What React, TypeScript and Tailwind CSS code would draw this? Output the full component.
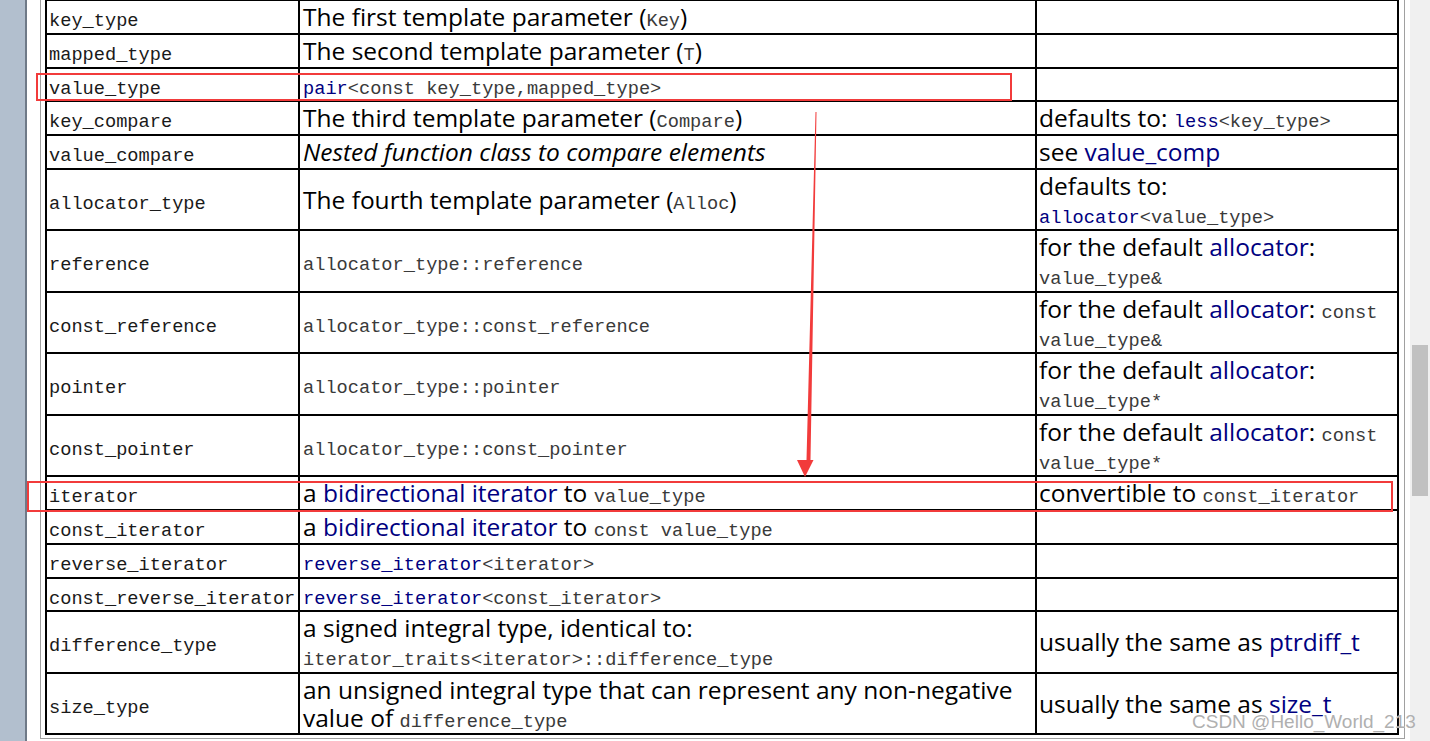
import type { ReactNode } from "react";

const mono = "font-['Liberation_Mono',monospace] text-[18.67px] leading-[18px]";

function M({ children, link }: { children: ReactNode; link?: boolean }) {
  return <span className={`${mono} ${link ? "text-[#000080]" : "text-[#3a3a3a]"}`}>{children}</span>;
}

function A({ children }: { children: ReactNode }) {
  return <span className="text-[#000080]">{children}</span>;
}

const rows: [string, ReactNode, ReactNode][] = [
  ["key_type", <>The first template parameter (<M>Key</M>)</>, null],
  ["mapped_type", <>The second template parameter (<M>T</M>)</>, null],
  ["value_type", <><M link>pair</M><M>&lt;const key_type,mapped_type&gt;</M></>, null],
  [
    "key_compare",
    <>The third template parameter (<M>Compare</M>)</>,
    <>defaults to: <M link>less</M><M>&lt;key_type&gt;</M></>,
  ],
  [
    "value_compare",
    <i>Nested function class to compare elements</i>,
    <>see <A>value_comp</A></>,
  ],
  [
    "allocator_type",
    <>The fourth template parameter (<M>Alloc</M>)</>,
    <>defaults to: <M link>allocator</M><M>&lt;value_type&gt;</M></>,
  ],
  [
    "reference",
    <M>allocator_type::reference</M>,
    <>for the default <A>allocator</A>: <M>value_type&amp;</M></>,
  ],
  [
    "const_reference",
    <M>allocator_type::const_reference</M>,
    <>for the default <A>allocator</A>: <M>const value_type&amp;</M></>,
  ],
  [
    "pointer",
    <M>allocator_type::pointer</M>,
    <>for the default <A>allocator</A>: <M>value_type*</M></>,
  ],
  [
    "const_pointer",
    <M>allocator_type::const_pointer</M>,
    <>for the default <A>allocator</A>: <M>const value_type*</M></>,
  ],
  [
    "iterator",
    <>a <A>bidirectional iterator</A> to <M>value_type</M></>,
    <>convertible to <M>const_iterator</M></>,
  ],
  ["const_iterator", <>a <A>bidirectional iterator</A> to <M>const value_type</M></>, null],
  ["reverse_iterator", <><M link>reverse_iterator</M><M>&lt;iterator&gt;</M></>, null],
  ["const_reverse_iterator", <><M link>reverse_iterator</M><M>&lt;const_iterator&gt;</M></>, null],
  [
    "difference_type",
    <>a signed integral type, identical to: <M>iterator_traits&lt;iterator&gt;::difference_type</M></>,
    <>usually the same as <A>ptrdiff_t</A></>,
  ],
  [
    "size_type",
    <>an unsigned integral type that can represent any non-negative value of <M>difference_type</M></>,
    <>usually the same as <A>size_t</A></>,
  ],
];

const cell = "flex items-center border-r-2 border-b-2 border-black py-[2px]";

export default function App() {
  return (
    <div className="relative flex h-[741px] w-[1430px] overflow-hidden bg-white">
      {/* left page edge */}
      <div className="w-[27px] shrink-0 border-r-2 border-[#6f7a88] bg-[#b2bfce]" />

      {/* framed member types table */}
      <div className="ml-[13px] h-[739px] w-[1365px] shrink-0 overflow-hidden border-x border-b border-[#a0a0a0] pl-[4px] pr-[5px]">
        <div className="-mt-px grid grid-cols-[253px_737px_362px] border-l-2 border-t-2 border-black font-['Open_Sans',sans-serif] text-[24.5px] leading-[27.75px] text-black">
          {rows.map(([name, def, note]) => (
            <div key={name} className="contents">
              <div className={`${cell} px-[2px]`}>
                <div>
                  <span className={`${mono} text-[#1a1a1a]`}>{name}</span>
                </div>
              </div>
              <div className={`${cell} pl-[3px] pr-[2px]`}>
                <div>{def}</div>
              </div>
              <div className={`${cell} px-[2px]`}>
                <div>{note}</div>
              </div>
            </div>
          ))}
        </div>
      </div>

      {/* scrollbar */}
      <div className="ml-[5px] w-[20px] shrink-0 bg-[#f0f0f0] px-[2px]">
        <div className="mt-[345px] h-[151px] bg-[#c1c1c1]" />
      </div>

      {/* annotations */}
      <div className="pointer-events-none absolute left-[36px] top-[73px] h-[28px] w-[976px] border-2 border-[#f23b3b]" />
      <div className="pointer-events-none absolute left-[27px] top-[481px] h-[31px] w-[1366px] border-2 border-[#f23b3b]" />
      <svg className="pointer-events-none absolute left-0 top-0" width="1430" height="741">
        <polygon
          points="815.5,112 816.5,112 810.5,460 813.5,460 805,477 797,460 806.5,460"
          fill="#f23b3b"
        />
      </svg>

      <div className="pointer-events-none absolute left-[1192px] top-[712px] font-['Liberation_Sans',Arial,sans-serif] text-[19px] leading-[19px] text-[#b0b0b0] [text-shadow:0_0_1px_rgba(255,255,255,0.9)]">
        CSDN @Hello_World_213
      </div>
    </div>
  );
}
